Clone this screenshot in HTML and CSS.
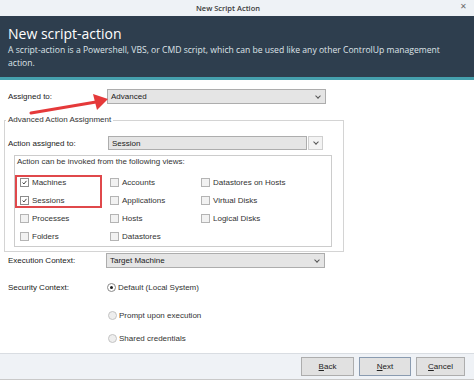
FILE: index.html
```html
<!DOCTYPE html>
<html lang="en">

<head>
    <meta charset="UTF-8">
    <title>New Script Action</title>
    <link rel="stylesheet" href="styles.css">
</head>

<body>
    <div class="window">
        <div class="titlebar">
            <span class="title">New Script Action</span>
            <span class="close">&#x2715;</span>
        </div>

        <div class="banner">
            <h1>New script-action</h1>
            <p>A script-action is a Powershell, VBS, or CMD script, which can be used like any other ControlUp management action.</p>
        </div>

        <div class="content">
            <div class="row assigned">
                <span class="label">Assigned to:</span>
                <div class="select wide"><span>Advanced</span><i class="chev"></i></div>
            </div>

            <fieldset class="group">
                <legend>Advanced Action Assignment</legend>
                <div class="row inner">
                    <span class="label">Action assigned to:</span>
                    <div class="combo">
                        <span class="combo-text">Session</span>
                        <span class="combo-btn"><i class="chev"></i></span>
                    </div>
                </div>

                <div class="views">
                    <div class="views-title">Action can be invoked from the following views:</div>
                    <div class="checks">
                        <label class="check on"><span class="box"><svg viewBox="0 0 9 9"><path d="M2 4.6 L3.8 6.4 L7 2.4" /></svg></span>Machines</label>
                        <label class="check"><span class="box"></span>Accounts</label>
                        <label class="check"><span class="box"></span>Datastores on Hosts</label>
                        <label class="check on"><span class="box"><svg viewBox="0 0 9 9"><path d="M2 4.6 L3.8 6.4 L7 2.4" /></svg></span>Sessions</label>
                        <label class="check"><span class="box"></span>Applications</label>
                        <label class="check"><span class="box"></span>Virtual Disks</label>
                        <label class="check"><span class="box"></span>Processes</label>
                        <label class="check"><span class="box"></span>Hosts</label>
                        <label class="check"><span class="box"></span>Logical Disks</label>
                        <label class="check"><span class="box"></span>Folders</label>
                        <label class="check"><span class="box"></span>Datastores</label>
                    </div>
                    <div class="highlight"></div>
                </div>
            </fieldset>

            <div class="row exec">
                <span class="label">Execution Context:</span>
                <div class="select wide"><span>Target Machine</span><i class="chev"></i></div>
            </div>

            <div class="row security">
                <span class="label">Security Context:</span>
                <label class="radio on"><span class="dot"></span>Default (Local System)</label>
            </div>
            <div class="row radio-row prompt">
                <label class="radio"><span class="dot"></span>Prompt upon execution</label>
            </div>
            <div class="row radio-row shared">
                <label class="radio"><span class="dot"></span>Shared credentials</label>
            </div>
        </div>

        <div class="footer">
            <button class="btn back"><u>B</u>ack</button>
            <button class="btn next"><u>N</u>ext</button>
            <button class="btn cancel"><u>C</u>ancel</button>
        </div>

        <svg class="arrow" viewBox="0 0 474 380" width="474" height="380">
            <path d="M31 113 L96 102" stroke="#e5393a" stroke-width="3" stroke-linecap="round" fill="none" />
            <polygon points="108,99 93,94 97,110" fill="#e5393a" />
        </svg>
    </div>
</body>

</html>
```

FILE: styles.css
```css
body {
    margin: 0;
    font-family: 'Liberation Sans', Arial, sans-serif;
    font-size: 8px;
    color: #1a1a1a;
    background: #ffffff;
}

.window {
    position: relative;
    width: 474px;
    height: 380px;
    display: flex;
    flex-direction: column;
    overflow: hidden;
}

/* title bar */
.titlebar {
    height: 16px;
    flex: none;
    background: #eef2f6;
    display: flex;
    align-items: center;
    justify-content: center;
    position: relative;
    padding-right: 18px;
}

.titlebar .title {
    font-family: 'Open Sans', sans-serif;
    font-size: 7.5px;
    font-weight: 600;
    color: #3a3a3a;
}

.titlebar .close {
    position: absolute;
    right: 7px;
    top: 2px;
    font-size: 8px;
    color: #6b6b6b;
}

/* dark header */
.banner {
    height: 64px;
    flex: none;
    background: #2e3e4e;
    border-bottom: 3px solid #45a0ad;
    color: #ffffff;
    padding: 8px 8px 0;
    box-sizing: border-box;
}

.banner h1 {
    margin: 0;
    font-family: 'Open Sans', sans-serif;
    font-weight: 400;
    font-size: 14px;
    line-height: 19px;
}

.banner p {
    margin: 1px 0 0;
    font-family: 'Open Sans', sans-serif;
    font-size: 8.6px;
    line-height: 13px;
    color: #dfe4e9;
    width: 440px;
}

/* body */
.content {
    flex: 1;
    display: flex;
    flex-direction: column;
    padding-top: 9px;
}

.row {
    display: flex;
    align-items: center;
}

.label {
    width: 99px;
    padding-left: 8px;
    flex: none;
}

.assigned {
    height: 15px;
}

.select {
    height: 15px;
    box-sizing: border-box;
    background: #e5e5e5;
    border: 1px solid #adadad;
    display: flex;
    align-items: center;
    justify-content: space-between;
    padding: 0 5px 0 3px;
}

.select.wide {
    width: 219px;
}

.chev {
    width: 3px;
    height: 3px;
    border-right: 1px solid #555;
    border-bottom: 1px solid #555;
    transform: rotate(45deg);
    margin-top: -2px;
}

.group {
    margin: 11px 0 0 4px;
    width: 340px;
    box-sizing: border-box;
    padding: 0 0 4px 0;
    border: 1px solid #d4d4d4;
}

.group legend {
    margin-left: 1px;
    padding: 0 2px;
    line-height: 10px;
    color: #333;
}

.inner {
    margin-top: 11px;
    height: 14px;
}

.inner .label {
    width: 100px;
    padding-left: 3px;
}

.combo {
    display: flex;
    width: 215px;
    height: 14px;
}

.combo-text {
    flex: 1;
    background: #e5e5e5;
    border: 1px solid #adadad;
    display: flex;
    align-items: center;
    padding-left: 3px;
}

.combo-btn {
    width: 13px;
    margin-left: 1px;
    border: 1px solid #cfcfcf;
    background: #f3f3f3;
    display: flex;
    align-items: center;
    justify-content: center;
}

.views {
    position: relative;
    margin: 5px 0 0 9px;
    width: 318px;
    height: 92px;
    box-sizing: border-box;
    border: 1px solid #cccccc;
    padding: 1px 0 0 2px;
}

.views-title {
    line-height: 10px;
    color: #333;
}

.checks {
    margin-top: 6px;
    display: grid;
    grid-template-columns: 90px 91px 1fr;
    grid-auto-rows: 18px;
    padding-left: 3px;
}

.check {
    display: flex;
    align-items: center;
    gap: 3px;
    color: #333;
}

.box {
    width: 9px;
    height: 9px;
    box-sizing: border-box;
    border: 1px solid #b4b4b4;
    background: #f2f2f2;
    display: flex;
}

.check.on .box {
    border-color: #8c8c8c;
    background: #ffffff;
}

.box svg {
    width: 7px;
    height: 7px;
}

.box path {
    fill: none;
    stroke: #333;
    stroke-width: 1.2;
}

.highlight {
    position: absolute;
    left: 0;
    top: 19px;
    width: 87px;
    height: 33px;
    border: 2px solid #e0484b;
    box-sizing: border-box;
}

.exec {
    margin-top: 1px;
    height: 15px;
}

.exec .select.wide {
    margin-left: -1px;
}

.security {
    margin-top: 11px;
    height: 16px;
}

.radio-row {
    height: 16px;
    padding-left: 108px;
}

.prompt {
    margin-top: 12px;
}

.shared {
    margin-top: 7px;
}

.radio {
    display: flex;
    align-items: center;
    gap: 2px;
    color: #333;
}

.dot {
    width: 9px;
    height: 9px;
    box-sizing: border-box;
    border-radius: 50%;
    border: 1px solid #c4c4c4;
    background: #eeeeee;
    position: relative;
}

.radio.on .dot {
    border-color: #8a8a8a;
    background: #ffffff;
}

.radio.on .dot::after {
    content: "";
    position: absolute;
    left: 2px;
    top: 2px;
    width: 3px;
    height: 3px;
    border-radius: 50%;
    background: #222;
}

/* footer */
.footer {
    height: 27px;
    flex: none;
    box-sizing: border-box;
    border-top: 1px solid #d9dde2;
    border-bottom: 1px solid #c9c9c9;
    background: #eff2f6;
    display: flex;
    justify-content: flex-end;
    align-items: flex-start;
    gap: 5px;
    padding: 3px 9px 0 0;
}

.btn {
    height: 19px;
    border: 1px solid #adadad;
    background: #e1e1e1;
    font-family: 'Liberation Sans', Arial, sans-serif;
    font-size: 8px;
    color: #222;
    padding: 0;
}

.btn u {
    text-decoration-thickness: 1px;
}

.back {
    width: 53px;
}

.next {
    width: 52px;
    border-color: #8a9bb0;
}

.cancel {
    width: 49px;
}

.arrow {
    position: absolute;
    left: 0;
    top: 0;
    pointer-events: none;
}
```
